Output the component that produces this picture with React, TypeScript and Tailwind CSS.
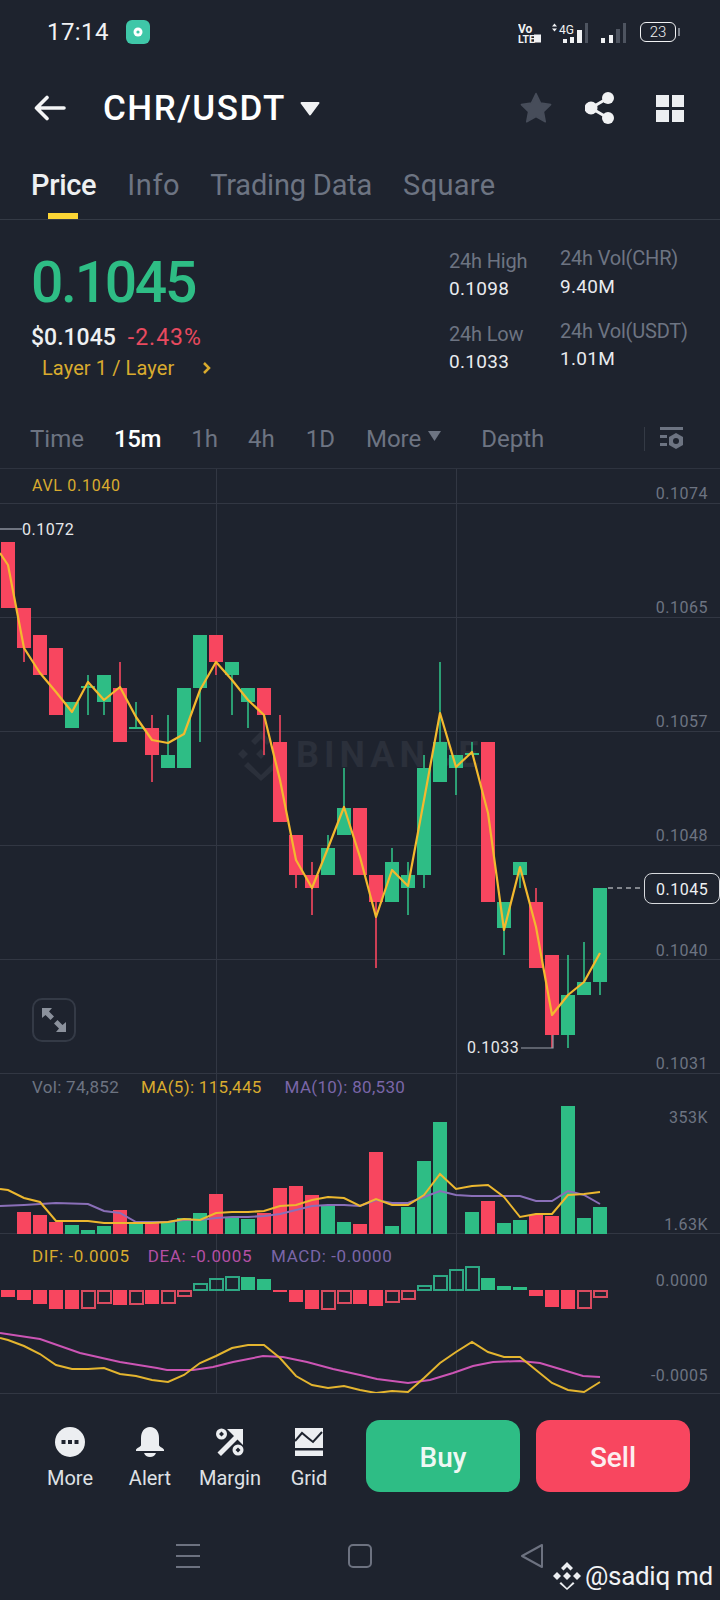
import React from "react";

const GREEN = "#2ebd85";
const RED = "#f8465f";

type C = [number, number, number, number, number];
// up(1)/down(0), body top, body bottom, wick top, wick bottom
const candles: C[] = [
  [0,542,608,542,608],[0,608,648,608,662],[0,635,675,635,675],[0,648,715,648,715],
  [1,702,728,702,728],[1,686,688,675,715],[1,675,702,675,715],[0,688,742,662,742],
  [1,727,729,702,729],[0,728,755,715,782],[1,755,768,715,768],[1,688,768,688,768],
  [1,635,688,635,742],[0,635,662,635,675],[1,662,675,662,715],[1,688,702,688,728],
  [0,688,715,688,755],[0,742,822,715,822],[0,835,875,835,888],[0,875,888,862,915],
  [1,848,875,835,875],[1,808,835,768,835],[0,808,875,808,875],[0,875,902,875,968],
  [1,862,902,848,902],[1,875,888,862,915],[1,768,875,755,888],[1,742,782,662,782],
  [1,755,768,755,795],[1,753,755,742,755],[0,742,902,742,902],[1,902,928,902,955],
  [1,862,875,862,888],[0,902,968,888,968],[0,955,1035,955,1048],[1,995,1035,955,1048],
  [1,982,995,942,995],[1,888,982,888,995],
];
const ma: [number, number][] = [[0,553],[8,565],[24,648],[40,673],[56,692],[72,712],[88,682],[104,700],[120,687],[136,717],[152,740],[168,743],[184,734],[200,690],[216,662],[232,680],[248,700],[264,715],[280,780],[296,860],[312,888],[328,848],[344,807],[360,857],[376,917],[392,870],[408,886],[424,800],[440,713],[456,767],[472,752],[488,813],[504,930],[520,867],[536,927],[552,1015],[568,995],[584,982],[600,953]];
const vol: [number, number][] = [[-1,1234],[0,1212],[0,1215],[0,1222],[1,1225],[1,1230],[1,1226],[0,1210],[1,1224],[0,1223],[1,1222],[1,1218],[1,1213],[0,1194],[1,1217],[1,1219],[0,1213],[0,1188],[0,1186],[0,1195],[1,1206],[1,1222],[0,1224],[0,1152],[1,1226],[1,1207],[1,1161],[1,1122],[-1,1234],[1,1212],[0,1201],[1,1223],[1,1220],[0,1215],[0,1216],[1,1106],[1,1218],[1,1207]];
const vma5: [number, number][] = [[0,1189],[8,1190],[24,1198],[40,1202],[56,1221],[72,1221],[88,1221],[104,1223],[120,1223],[136,1223],[152,1223],[168,1222],[184,1219],[200,1220],[216,1213],[232,1212],[248,1212],[264,1211],[280,1206],[296,1205],[312,1200],[328,1197],[344,1198],[360,1206],[376,1199],[392,1205],[408,1205],[424,1195],[440,1174],[456,1189],[472,1186],[488,1185],[504,1197],[520,1217],[536,1214],[552,1214],[568,1195],[584,1194],[600,1192]];
const vma10: [number, number][] = [[0,1206],[24,1205],[40,1204],[56,1203],[88,1204],[104,1211],[120,1213],[136,1222],[152,1222],[168,1222],[184,1220],[200,1220],[216,1218],[232,1217],[248,1217],[264,1216],[280,1214],[296,1210],[312,1206],[328,1205],[344,1205],[360,1206],[376,1200],[392,1203],[408,1203],[424,1197],[440,1191],[456,1195],[472,1196],[488,1196],[504,1196],[520,1196],[536,1201],[552,1201],[568,1191],[584,1195],[600,1204]];
// value edge, hollow
const hist: [number, number][] = [[1297,0],[1300,0],[1304,0],[1309,0],[1309,0],[1308,1],[1303,1],[1305,0],[1304,1],[1304,0],[1303,1],[1296,1],[1283,1],[1278,1],[1276,1],[1277,0],[1279,0],[1292,0],[1302,0],[1309,0],[1309,1],[1303,1],[1304,0],[1306,0],[1302,1],[1299,1],[1285,1],[1275,1],[1269,1],[1266,1],[1278,0],[1286,0],[1287,0],[1296,0],[1307,0],[1309,0],[1308,1],[1297,1]];
const dif: [number, number][] = [[0,1338],[8,1340],[24,1346],[40,1354],[56,1365],[72,1369],[88,1369],[104,1368],[120,1374],[136,1376],[152,1380],[168,1382],[184,1375],[200,1363],[216,1356],[232,1348],[248,1345],[264,1345],[280,1358],[296,1376],[312,1385],[328,1388],[344,1386],[360,1390],[376,1393],[392,1391],[408,1392],[424,1378],[440,1363],[456,1352],[472,1342],[488,1352],[504,1357],[520,1357],[536,1370],[552,1383],[568,1390],[584,1392],[600,1382]];
const dea: [number, number][] = [[0,1333],[40,1339],[80,1353],[120,1362],[157,1368],[167,1370],[193,1370],[213,1367],[233,1362],[263,1356],[283,1357],[307,1362],[333,1369],[360,1375],[377,1379],[408,1383],[430,1380],[453,1373],[473,1366],[493,1362],[520,1361],[540,1363],[560,1369],[583,1376],[600,1377]];

const pts = (a: [number, number][]) => a.map((p) => p.join(",")).join(" ");
const cx = (i: number) => 8 + 16 * i;

function GridLines({ ys, y0, y1 }: { ys: number[]; y0: number; y1: number }) {
  return (
    <g stroke="#323743" strokeWidth="1" shapeRendering="crispEdges">
      {ys.map((y) => <line key={y} x1="0" x2="720" y1={y} y2={y} />)}
      <line x1="216.5" x2="216.5" y1={y0} y2={y1} />
      <line x1="456.5" x2="456.5" y1={y0} y2={y1} />
    </g>
  );
}

const font = { fontFamily: "Roboto, 'Noto Sans', sans-serif" };

function StatusBar() {
  return (
    <div className="h-[64px] pl-[47px] pr-[44px] flex items-center">
      <span className="text-[24px] leading-none text-[#f1f2f4] tracking-[0.4px]">17:14</span>
      <div className="ml-[17px] w-[24px] h-[24px] rounded-[6px] bg-[#3fc7a8] flex items-center justify-center">
        <svg width="14" height="14" viewBox="0 0 14 14"><circle cx="7" cy="7" r="4.500" fill="#fff" /><circle cx="7" cy="7" r="1.600" fill="#3fc7a8" /></svg>
      </div>
      <div className="ml-auto flex items-center">
        <svg className="mt-[1px]" width="110" height="22" viewBox="515 21.500 110 22">
          <text x="515" y="32" fontSize="12" fontWeight="700" fill="#f1f2f4" fontFamily="Roboto">Vo</text>
          <text x="515" y="42" fontSize="10.500" fontWeight="700" fill="#f1f2f4" fontFamily="Roboto">LTE</text>
          <rect x="531" y="34" width="7" height="8" fill="#f1f2f4" />
          <path d="M549 26l2.500-3 2.500 3zM549 28l2.500 3 2.500-3z" fill="#f1f2f4" />
          <text x="556" y="33" fontSize="12" fill="#f1f2f4" fontFamily="Roboto">4G</text>
          <g fill="#f1f2f4" shapeRendering="crispEdges">
            <rect x="560" y="38" width="4" height="4" /><rect x="567" y="36" width="4" height="6" /><rect x="574" y="29" width="5" height="13" />
            <rect x="598" y="37" width="4" height="5" /><rect x="606" y="34" width="4" height="8" />
          </g>
          <g fill="#4e5460" shapeRendering="crispEdges">
            <rect x="582" y="22" width="3" height="20" /><rect x="613" y="28" width="4" height="14" /><rect x="620" y="22" width="3" height="20" />
          </g>
        </svg>
        <div className="ml-[12px] w-[36px] h-[20px] rounded-[6px] border-[1.500px] border-[#f1f2f4] flex items-center justify-center text-[15px] leading-none font-light text-[#f1f2f4] relative">
          23
          <span className="absolute -right-[5px] top-[5px] w-[2px] h-[8px] bg-[#7d828c]" />
        </div>
      </div>
    </div>
  );
}

function Header() {
  return (
    <div className="h-[80px] flex items-center pt-[8px] pl-[34px] pr-[36px]">
      <svg width="32" height="26" viewBox="0 0 32 26" fill="none" stroke="#f4f5f6" strokeWidth="3.600" strokeLinecap="round" strokeLinejoin="round">
        <path d="M2.500 13H30M13 2.500L2.500 13 13 23.500" />
      </svg>
      <span className="ml-[37px] text-[35px] leading-none font-medium text-white tracking-[1.500px]">CHR/USDT</span>
      <svg className="ml-[14px]" width="20" height="15" viewBox="0 0 20 15"><path d="M1.500 2h17L10 13.500z" fill="#f0f1f3" strokeLinejoin="round" stroke="#f0f1f3" strokeWidth="2" /></svg>
      <div className="ml-auto flex items-center">
        <svg width="32" height="32" viewBox="0 0 32 32"><path d="M16 1.500l4.600 9.500 10 1.600-7.200 7 1.900 10.200L16 24.700 6.700 29.800l1.900-10.200-7.200-7 10-1.600z" fill="#474d5a" stroke="#474d5a" strokeWidth="1.500" strokeLinejoin="round" /></svg>
        <svg className="ml-[33px]" width="30" height="32" viewBox="0 0 30 32" fill="#f1f2f4">
          <circle cx="23" cy="6" r="6" /><circle cx="6" cy="16" r="6.500" /><circle cx="23" cy="26" r="6" />
          <path d="M6 16L23 6M6 16l17 10" stroke="#f1f2f4" strokeWidth="3" />
        </svg>
        <div className="ml-[41px] grid grid-cols-2 gap-[3px] w-[28px]">
          <span className="h-[12px] bg-[#eceef1]" /><span className="h-[12px] bg-[#eceef1]" /><span className="h-[12px] bg-[#eceef1]" /><span className="h-[12px] bg-[#eceef1]" />
        </div>
      </div>
    </div>
  );
}

function Tabs() {
  return (
    <div className="h-[76px] border-b border-[#343a45] pl-[31px] flex items-start pt-[24px] relative">
      <span className="text-[29px] leading-[34px] font-medium text-[#eef0f2] tracking-[-0.3px]">Price</span>
      <span className="ml-[31px] text-[29px] leading-[34px] text-[#6d7482] tracking-[0.600px]">Info</span>
      <span className="ml-[30px] text-[29px] leading-[34px] text-[#6d7482] tracking-[-0.2px]">Trading Data</span>
      <span className="ml-[31px] text-[29px] leading-[34px] text-[#6d7482] tracking-[0.300px]">Square</span>
      <span className="absolute left-[48px] bottom-0 w-[30px] h-[6px] bg-[#fcd535]" />
    </div>
  );
}

function Stats() {
  const lab = "text-[20px] leading-[26px] text-[#6d7482] tracking-[-0.2px]";
  const val = "text-[19px] leading-[26px] text-[#e9ebee] tracking-[0.300px]";
  return (
    <div className="h-[182px] flex pl-[31px]">
      <div className="w-[418px] pt-[30px]">
        <div className="text-[57px] leading-[66px] font-medium tracking-[-2.300px] text-[#2ebd85]">0.1045</div>
        <div className="mt-[7px] flex items-center h-[28px]">
          <span className="text-[23px] leading-none font-medium text-[#eef0f2]">$0.1045</span>
          <span className="ml-[12px] text-[23px] leading-none text-[#e84a5f] tracking-[1px]">-2.43%</span>
        </div>
        <div className="mt-[2px] ml-[11px] flex items-center h-[30px]">
          <span className="text-[20px] leading-none text-[#d9ab2e] tracking-[0.100px]">Layer 1 / Layer</span>
          <svg className="ml-[28px]" width="10" height="14" viewBox="0 0 10 14" fill="none" stroke="#d9ab2e" strokeWidth="2.500"><path d="M2 2l5 5-5 5" /></svg>
        </div>
      </div>
      <div className="w-[111px] pt-[28px]">
        <div className={lab}>24h High</div>
        <div className={val + " mt-[2px]"}>0.1098</div>
        <div className={lab + " mt-[19px]"}>24h Low</div>
        <div className={val + " mt-[2px]"}>0.1033</div>
      </div>
      <div className="pt-[25px]">
        <div className={lab}>24h Vol(CHR)</div>
        <div className={val + " mt-[3px]"}>9.40M</div>
        <div className={lab + " mt-[18px]"}>24h Vol(USDT)</div>
        <div className={val + " mt-[2px]"}>1.01M</div>
      </div>
    </div>
  );
}

function Intervals() {
  const t = "text-[24px] leading-none text-[#6d7482]";
  return (
    <div className="h-[67px] border-b border-[#2e333f] flex items-center pl-[30px] pt-[8px]">
      <span className={t}>Time</span>
      <span className="ml-[30px] text-[24px] leading-none font-medium text-white tracking-[-0.3px]">15m</span>
      <span className={t + " ml-[30px]"}>1h</span>
      <span className={t + " ml-[30px]"}>4h</span>
      <span className={t + " ml-[31px]"}>1D</span>
      <span className={t + " ml-[31px]"}>More</span>
      <svg className="ml-[7px] -mt-[6px]" width="13" height="10" viewBox="0 0 13 10"><path d="M0 0h13L6.500 10z" fill="#6d7482" /></svg>
      <span className={t + " ml-[40px]"}>Depth</span>
      <span className="ml-[100px] w-px h-[24px] bg-[#343a45]" />
      <svg className="ml-[14px]" width="25" height="26" viewBox="0 0 25 26" fill="#6d7482">
        <rect x="1" y="1" width="23" height="3" /><rect x="1" y="9" width="7" height="3" /><rect x="1" y="17" width="7" height="3" />
        <path d="M17 7l7 4v8l-7 4-7-4v-8z" /><circle cx="17" cy="15" r="3" fill="#1e232e" />
      </svg>
    </div>
  );
}

function Watermark() {
  return (
    <>
      <svg className="absolute left-[235px] top-[260px]" width="52" height="52" viewBox="0 0 52 52" fill="#2b303b">
        <path d="M26 2l10 10-4 4-6-6-6 6-4-4zM8 20l5 5-5 5-5-5zM44 20l5 5-5 5-5-5zM26 20l5 5-5 5-5-5zM13 33l13 13 13-13 4 4-17 15-17-15z" />
      </svg>
      <span className="absolute left-[296px] top-[263px] text-[36px] leading-[46px] font-bold text-[#2b303b] tracking-[5px]">BINANCE</span>
    </>
  );
}

const axisCls = "absolute right-[12px] h-[20px] text-[16px] leading-[20px] text-[#6d7482] tracking-[0.500px]";

function MainChart() {
  return (
    <div className="relative h-[604px]">
      <Watermark />
      <svg className="absolute inset-0" width="720" height="604" viewBox="0 469 720 604">
        <GridLines ys={[503, 617, 731, 845, 959]} y0={469} y1={1073} />
        {candles.map((c, i) => {
          const col = c[0] ? GREEN : RED;
          return (
            <g key={i} fill={col} shapeRendering="crispEdges">
              <rect x={cx(i) - 1} y={c[3]} width="2" height={c[4] - c[3]} opacity="0.8" />
              <rect x={cx(i) - 7} y={c[1]} width="14" height={c[2] - c[1]} />
            </g>
          );
        })}
        <polyline points={pts(ma)} fill="none" stroke="#f3b92e" strokeWidth="2.200" strokeLinejoin="round" />
        <line x1="0" x2="22" y1="529" y2="529" stroke="#8b919c" strokeWidth="1.500" />
        <path d="M521 1048h32v-13" fill="none" stroke="#9a9fa9" strokeWidth="1.200" />
        <line x1="608" x2="644" y1="888" y2="888" stroke="#e6e8eb" strokeWidth="1" strokeDasharray="5 4" />
      </svg>
      <span className="absolute left-[32px] top-[7px] text-[16px] leading-[20px] text-[#d9ab2e] tracking-[0.700px]">AVL 0.1040</span>
      <span className={axisCls + " top-[15px]"}>0.1074</span>
      <span className={axisCls + " top-[129px]"}>0.1065</span>
      <span className={axisCls + " top-[243px]"}>0.1057</span>
      <span className={axisCls + " top-[357px]"}>0.1048</span>
      <span className={axisCls + " top-[472px]"}>0.1040</span>
      <span className={axisCls + " top-[585px]"}>0.1031</span>
      <span className="absolute left-[22px] top-[51px] text-[16px] leading-[20px] text-[#e6e8eb] tracking-[0.500px]">0.1072</span>
      <span className="absolute left-[467px] top-[569px] text-[16px] leading-[20px] text-[#e6e8eb] tracking-[0.500px]">0.1033</span>
      <span className="absolute left-[644px] top-[404px] w-[76px] h-[31px] rounded-[8px] border border-[#d8dade] bg-[#1e232e] text-[16px] leading-[31px] text-[#eef0f2] tracking-[0.500px] pl-[11px]">0.1045</span>
      <div className="absolute left-[32px] top-[529px] w-[44px] h-[44px] rounded-[10px] border-2 border-[#343a46] flex items-center justify-center">
        <svg width="26" height="26" viewBox="0 0 26 26" fill="#8b919c">
          <path d="M1 1h10L8 4.500 13 9.500 9.500 13 4.500 8 1 11zM25 25H15l3-3.500-5-5 3.500-3.500 5 5 3.500-3z" />
        </svg>
      </div>
    </div>
  );
}

function VolChart() {
  return (
    <div className="relative h-[161px] border-t border-[#323743]">
      <svg className="absolute left-0 -top-px" width="720" height="161" viewBox="0 1073 720 161">
        <GridLines ys={[1233]} y0={1073} y1={1234} />
        {vol.map((v, i) =>
          v[0] < 0 ? null : (
            <rect key={i} x={cx(i) - 7} y={v[1]} width="14" height={1234 - v[1]} fill={v[0] ? GREEN : RED} shapeRendering="crispEdges" />
          )
        )}
        <polyline points={pts(vma10)} fill="none" stroke="#8a6fb8" strokeWidth="2" />
        <polyline points={pts(vma5)} fill="none" stroke="#edb82f" strokeWidth="2" />
      </svg>
      <div className="absolute left-[32px] top-[3px] flex text-[17px] leading-[20px] tracking-[0.300px]">
        <span className="text-[#6d7482]">Vol: 74,852</span>
        <span className="ml-[22px] text-[#d9ab2e]">MA(5): 115,445</span>
        <span className="ml-[23px] text-[#7a66a8]">MA(10): 80,530</span>
      </div>
      <span className={axisCls + " top-[34px]"}>353K</span>
      <span className={axisCls + " top-[141px]"}>1.63K</span>
    </div>
  );
}

function MacdChart() {
  return (
    <div className="relative h-[160px] border-b border-[#323743]">
      <svg className="absolute inset-0" width="720" height="159" viewBox="0 1234 720 159">
        <GridLines ys={[]} y0={1234} y1={1393} />
        {hist.map((h, i) => {
          const v = h[0];
          const up = v < 1290;
          const col = up ? GREEN : RED;
          const y = up ? v : 1290;
          const ht = Math.abs(v - 1290);
          return h[1] ? (
            <rect key={i} x={cx(i) - 6} y={y + 1} width="13" height={ht - 1} fill="none" stroke={up ? "#2ea884" : "#d94b60"} strokeWidth="2" shapeRendering="crispEdges" />
          ) : (
            <rect key={i} x={cx(i) - 7} y={y} width="14" height={ht} fill={col} shapeRendering="crispEdges" />
          );
        })}
        <polyline points={pts(dea)} fill="none" stroke="#cc55b5" strokeWidth="2" />
        <polyline points={pts(dif)} fill="none" stroke="#e4b52f" strokeWidth="2" />
      </svg>
      <div className="absolute left-[32px] top-[12px] flex text-[17px] leading-[20px] tracking-[0.600px]">
        <span className="text-[#d9ab2e]">DIF: -0.0005</span>
        <span className="ml-[18px] text-[#b44fa4]">DEA: -0.0005</span>
        <span className="ml-[19px] text-[#7a66a8]">MACD: -0.0000</span>
      </div>
      <span className={axisCls + " top-[37px]"}>0.0000</span>
      <span className={axisCls + " top-[132px]"}>-0.0005</span>
    </div>
  );
}

function Action({ label, cls, children }: { label: string; cls: string; children: React.ReactNode }) {
  return (
    <div className={"absolute top-[32px] w-[80px] flex flex-col items-center " + cls}>
      <div className="h-[32px] flex items-center justify-center">{children}</div>
      <span className="mt-[8px] text-[20px] leading-[24px] text-[#dfe1e5]">{label}</span>
    </div>
  );
}

function BottomBar() {
  return (
    <div className="h-[126px] relative flex pl-[366px] pt-[26px]">
      <Action label="More" cls="left-[30px]">
        <svg width="30" height="30" viewBox="0 0 30 30"><circle cx="15" cy="15" r="15" fill="#eceef1" /><g fill="#1e232e"><rect x="6.500" y="13" width="4" height="4" /><rect x="13" y="13" width="4" height="4" /><rect x="19.500" y="13" width="4" height="4" /></g></svg>
      </Action>
      <Action label="Alert" cls="left-[110px]">
        <svg width="28" height="30" viewBox="0 0 28 30" fill="#eceef1"><path d="M14 0c6 0 9 5 9 11v7c0 2 5 3 5 5v1H0v-1c0-2 5-3 5-5v-7C5 5 8 0 14 0z" /><path d="M8 26h12c-1 2.500-3 4-6 4s-5-1.500-6-4z" /></svg>
      </Action>
      <Action label="Margin" cls="left-[190px]">
        <svg width="28" height="28" viewBox="0 0 28 28" fill="#eceef1">
          <path d="M11 1h16v16l-5.500-5.500L5 28l-3.500-3.500L18 8z" />
          <circle cx="5.500" cy="6" r="5.500" /><circle cx="22" cy="22" r="5.500" />
          <path d="M5.500 3.500L8 6 5.500 8.500 3 6zM22 19.500L24.500 22 22 24.500 19.500 22z" fill="#1e232e" />
        </svg>
      </Action>
      <Action label="Grid" cls="left-[269px]">
        <svg width="28" height="28" viewBox="0 0 28 28">
          <rect width="28" height="20" fill="#eceef1" />
          <polyline points="0,13 7,5 13,10 18,14 27,4" fill="none" stroke="#1e232e" strokeWidth="2" />
          <rect y="22.500" width="28" height="5.500" fill="#eceef1" />
        </svg>
      </Action>
      <div className="w-[154px] h-[72px] rounded-[14px] bg-[#2ebd85] flex items-center justify-center pt-[3px] text-[28px] font-medium text-[#eef8f4]">Buy</div>
      <div className="ml-[16px] w-[154px] h-[72px] rounded-[14px] bg-[#f8465f] flex items-center justify-center pt-[3px] text-[28px] font-medium text-[#fdeef0]">Sell</div>
    </div>
  );
}

function NavBar() {
  return (
    <div className="h-[80px] relative pl-[176px] pt-[24px] flex items-start">
      <div className="w-[24px] h-[24px] flex flex-col justify-between">
        <span className="h-[2px] bg-[#6d7280]" /><span className="h-[2px] bg-[#6d7280]" /><span className="h-[2px] bg-[#6d7280]" />
      </div>
      <div className="ml-[148px] w-[24px] h-[24px] rounded-[5px] border-2 border-[#6d7280]" />
      <svg className="ml-[148px]" width="24" height="24" viewBox="0 0 24 24" fill="none" stroke="#6d7280" strokeWidth="2" strokeLinejoin="round"><path d="M22 1v22L2 12z" /></svg>
      <div className="absolute left-[553px] top-[41px] flex items-center">
        <svg width="28" height="28" viewBox="0 0 28 28" fill="#eceef1">
          <path d="M14 0l6 6-2.500 2.500L14 5l-3.500 3.500L8 6zM4 10l4 4-4 4-4-4zM24 10l4 4-4 4-4-4zM14 10l4 4-4 4-4-4zM8 20l6 6 6-6 1.500 1.500L14 28l-7.500-6.500z" />
        </svg>
        <span className="ml-[4px] text-[26px] leading-[30px] text-[#f1f2f4] tracking-[-0.3px]">@sadiq md</span>
      </div>
    </div>
  );
}

export default function App() {
  return (
    <div className="w-[720px] h-[1600px] overflow-hidden bg-[#1e232e]" style={font}>
      <StatusBar />
      <Header />
      <Tabs />
      <Stats />
      <Intervals />
      <MainChart />
      <VolChart />
      <MacdChart />
      <BottomBar />
      <NavBar />
    </div>
  );
}
